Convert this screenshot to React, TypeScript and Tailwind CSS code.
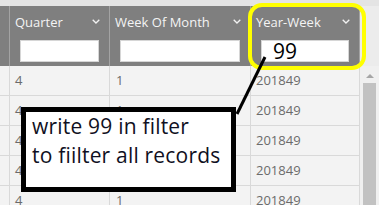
import { ReactNode } from 'react';

const Chevron = () => (
  <svg width="8" height="5" viewBox="0 0 8 5" className="shrink-0">
    <path d="M0.7 0.7 L4 4 L7.3 0.7" fill="none" stroke="#f2f2f2" strokeWidth="1.3" />
  </svg>
);

const HeaderCell = ({ label, width, filter }: { label: string; width: string; filter?: ReactNode }) => (
  <div className={`flex ${width} flex-col border-r border-[#a3a3a3] px-[10px]`}>
    <div className="flex h-[34px] items-start justify-between pt-[8px]">
      <span className="-ml-[5px] text-[13px] leading-[16px] text-[#f4f4f4]">{label}</span>
      <span className="mt-[5px] -mr-[1px]">
        <Chevron />
      </span>
    </div>
    <div className="h-[22px] border border-[#d6d6d6] bg-white">{filter}</div>
  </div>
);

const rows = [0, 1, 2, 3, 4];

const App = () => (
  <div className="relative h-[205px] w-[379px] overflow-hidden bg-[#f3f3f3] font-['Open_Sans',sans-serif]">
    <div className="h-[6px] bg-[#e4e4e4]" />
    <div className="flex">
      <div className="w-[360px]">
        <div className="flex h-[60px] bg-[#7f7f7f]">
          <div className="w-[10px] border-r border-[#a3a3a3]" />
          <HeaderCell label="Quarter" width="w-[100px]" />
          <HeaderCell label="Week Of Month" width="w-[141px]" />
          <HeaderCell
            label="Year-Week"
            width="w-[109px]"
            filter={<span className="block pl-[11px] text-[21px] leading-[20px] text-black">99</span>}
          />
        </div>
        {rows.map((r) => (
          <div key={r} className="flex h-[30px] border-b border-[#d9d9d9] text-[13px] text-[#6b6b6b]">
            <div className="w-[10px] border-r border-[#d9d9d9]" />
            <div className="flex w-[100px] items-center border-r border-[#d9d9d9] pl-[5px]">4</div>
            <div className="flex w-[141px] items-center border-r border-[#d9d9d9] pl-[6px]">1</div>
            <div className="flex w-[109px] items-center border-r border-[#d9d9d9] pl-[5px]">201849</div>
          </div>
        ))}
      </div>
      <div className="flex w-[19px] flex-col">
        <div className="h-[60px] bg-[#ececec]" />
        <div className="flex flex-1 flex-col items-center bg-[#f0f0f0] pt-[8px]">
          <svg width="8" height="4" viewBox="0 0 8 4">
            <path d="M0 4 L4 0 L8 4 Z" fill="#a6a6a6" />
          </svg>
          <div className="mt-[5px] h-[140px] w-[13px] bg-[#c2c2c2]" />
        </div>
      </div>
    </div>

    <div className="absolute left-[248px] top-[3px] h-[67px] w-[118px] rounded-[14px] border-[4px] border-[#ffff00]" />

    <svg className="absolute left-0 top-0" width="379" height="205">
      <line x1="265" y1="57" x2="237" y2="114" stroke="black" strokeWidth="3" />
    </svg>

    <div className="absolute left-[21px] top-[107px] h-[85px] w-[215px] border-[5px] border-black bg-white pl-[6px] pt-0 text-[21px] leading-[29px] tracking-[0.2px] text-[#101022]">
      <div>write 99 in filter</div>
      <div>to fiilter all records</div>
    </div>
  </div>
);

export default App;
